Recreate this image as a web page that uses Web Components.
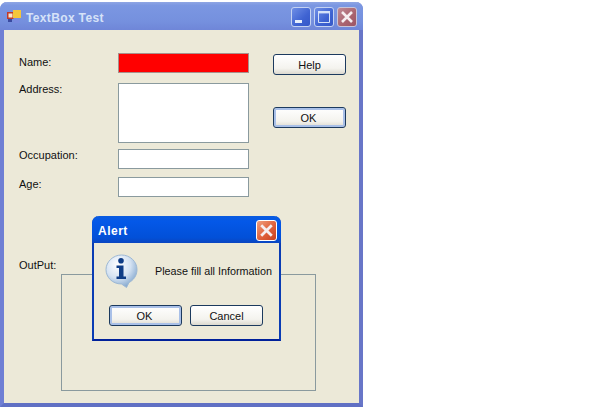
<!DOCTYPE html>
<html>
<head>
<meta charset="utf-8">
<title>TextBox Test</title>
<style>
html, body { margin: 0; background: #fff; }
body { width: 603px; height: 408px; overflow: hidden; position: relative; font: 11px "Liberation Sans", Arial, sans-serif; color: #111; }
</style>
</head>
<body>
<test-window></test-window>
<script>
const captionButtonTemplate = document.createElement('template');
captionButtonTemplate.innerHTML = `
<style>
:host { display: block; width: 20px; height: 20px; box-sizing: border-box; border: 1px solid #c4d2f2; border-radius: 3px; background: linear-gradient(135deg, #6f8fe6 0%, #3f63d2 60%, #3558c8 100%); }
:host([kind="close"]) { background: linear-gradient(135deg, #c08a94 0%, #a9636f 60%, #9c5564 100%); border-color: #c8c4d8; }
:host([active]) { width: 21px; height: 21px; background: linear-gradient(135deg, #f0a080 0%, #e0603a 55%, #c8401f 100%); border-color: #fff; }
svg { display: block; width: 100%; height: 100%; }
</style>
<svg viewBox="0 0 18 18"></svg>
`;
const captionGlyphs = {
  min: '<rect x="3" y="12" width="7" height="3" fill="#e6eefc"/>',
  max: '<path d="M3.500 4.500h11v10h-11z" fill="none" stroke="#d6e2f8"/><rect x="3" y="3" width="12" height="2.400" fill="#d6e2f8"/>',
  close: '<path d="M4 4l10 10M14 4L4 14" stroke="#f6eef0" stroke-width="2.600" fill="none"/>'
};

class CaptionButton extends HTMLElement {
  constructor() {
    super();
    this.attachShadow({ mode: 'open' });
    this.shadowRoot.appendChild(captionButtonTemplate.content.cloneNode(true));
  }

  connectedCallback() {
    this.shadowRoot.querySelector('svg').innerHTML = captionGlyphs[this.getAttribute('kind')];
  }
}
window.customElements.define('caption-button', CaptionButton);

const pushButtonTemplate = document.createElement('template');
pushButtonTemplate.innerHTML = `
<style>
:host { display: flex; align-items: center; justify-content: center; box-sizing: border-box; width: 73px; height: 21px; border: 1px solid #1c3a5e; border-radius: 3px; background: linear-gradient(#ffffff 0%, #f4f3ee 70%, #dcd9cf 100%); font: 11px "Liberation Sans", Arial, sans-serif; color: #111; }
:host([default]) { box-shadow: inset 0 0 0 2px #a9c0e8; padding-right: 2px; }
</style>
<slot></slot>
`;

class PushButton extends HTMLElement {
  constructor() {
    super();
    this.attachShadow({ mode: 'open' });
    this.shadowRoot.appendChild(pushButtonTemplate.content.cloneNode(true));
  }
}
window.customElements.define('push-button', PushButton);

const textFieldTemplate = document.createElement('template');
textFieldTemplate.innerHTML = `
<style>
:host { display: block; box-sizing: border-box; width: 131px; height: 20px; border: 1px solid #8a9a9e; background: #fff; }
:host([error]) { background: #ff0000; border-color: #a8908c; }
:host([tall]) { height: 60px; }
</style>
`;

class TextField extends HTMLElement {
  constructor() {
    super();
    this.attachShadow({ mode: 'open' });
    this.shadowRoot.appendChild(textFieldTemplate.content.cloneNode(true));
  }
}
window.customElements.define('text-field', TextField);

const alertDialogTemplate = document.createElement('template');
alertDialogTemplate.innerHTML = `
<style>
:host { position: absolute; left: 92px; top: 216px; width: 189px; height: 125px; display: flex; flex-direction: column; box-sizing: border-box; border-radius: 7px 7px 0 0; border: 2px solid #0a3cb4; border-top: 0; border-bottom-color: #00209a; background: #ece9d8; }
.title { height: 27px; margin: 0 -2px; border-radius: 7px 7px 0 0; display: flex; align-items: center; justify-content: space-between; padding: 2px 4px 0 6px; box-sizing: border-box; background: linear-gradient(#0a5ce0 0%, #0458e8 20%, #0250d8 80%, #0a45c0 100%); color: #fff; font: bold 12px "Liberation Sans", Arial, sans-serif; letter-spacing: .5px; }
.message { display: flex; gap: 17px; padding: 11px 0 0 11px; height: 35px; white-space: nowrap; font-size: 10.800px; }
.message svg { flex: none; width: 33px; height: 35px; }
.message span { padding-top: 11px; }
.buttons { display: flex; gap: 8px; padding: 16px 0 0 15px; }
</style>
<div class="title"><span>Alert</span><caption-button kind="close" active></caption-button></div>
<div class="message">
<svg viewBox="0 0 33 35">
<defs>
<radialGradient id="bubble" cx=".38" cy=".3" r=".75"><stop offset="0" stop-color="#ffffff"/><stop offset=".55" stop-color="#d4e2f2"/><stop offset="1" stop-color="#7fa4cc"/></radialGradient>
</defs>
<path d="M16.500 1C25 1 32 7.500 32 15.500C32 22 28 26.500 24 28.500L21.500 33.500 16.500 30C7 30 1 23 1 15.500S8 1 16.500 1z" fill="url(#bubble)" stroke="#9db8d4"/>
<circle cx="16" cy="6.800" r="2.800" fill="#0f3d86"/>
<path d="M11.500 11.500h7v11h2.500V25H11.500v-2.500h2.500V14H11.500z" fill="#0f3d86"/>
</svg>
<span><slot></slot></span>
</div>
<div class="buttons"><push-button default>OK</push-button><push-button>Cancel</push-button></div>
`;

class AlertDialog extends HTMLElement {
  constructor() {
    super();
    this.attachShadow({ mode: 'open' });
    this.shadowRoot.appendChild(alertDialogTemplate.content.cloneNode(true));
  }
}
window.customElements.define('alert-dialog', AlertDialog);

const testWindowTemplate = document.createElement('template');
testWindowTemplate.innerHTML = `
<style>
:host { position: absolute; left: 0; top: 2px; width: 363px; height: 405px; display: flex; flex-direction: column; box-sizing: border-box; border-radius: 7px 7px 0 0; border: 4px solid #6f7fd4; border-top: 0; border-right-color: #6876c8; border-bottom-color: #6070c4; background: #ece9d8; }
.title { flex: none; height: 28px; margin: 0 -4px; padding: 0 6px 0 7px; display: flex; align-items: center; gap: 5px; border-radius: 7px 7px 0 0; background: linear-gradient(#8fa6e4 0%, #7b97e2 12%, #7590de 70%, #6f86d8 100%); color: #d6e2f8; font: bold 12px "Liberation Sans", Arial, sans-serif; letter-spacing: .35px; }
.title svg { flex: none; width: 14px; height: 13px; }
.title span { flex: 1; padding-top: 3px; }
.caption { display: flex; gap: 3px; margin-top: 1px; }
.client { flex: 1; display: flex; flex-direction: column; padding: 23px 0 0 15px; }
.top { display: flex; }
.form { display: grid; grid-template-columns: 99px 131px; grid-template-rows: 30px 66px 28px 20px; width: 254px; }
.name { padding-top: 3px; }
.age { padding-top: 1px; }
.actions { display: flex; flex-direction: column; gap: 32px; padding-top: 1px; }
.output-label { margin-top: 62px; height: 15px; }
.output { box-sizing: border-box; width: 255px; height: 117px; margin-left: 42px; border: 1px solid #8a9a9e; }
</style>
<div class="title">
<svg viewBox="0 0 14 13"><rect x="0" y="2" width="7" height="7" fill="#c03a2a"/><rect x="1.500" y="3.500" width="4" height="4" fill="#f8e8d0"/><rect x="6" y="0" width="8" height="8" fill="#f4c63c"/><rect x="6.500" y="8" width="6" height="5" fill="#7a8ce0"/><rect x="1" y="9" width="4" height="3" fill="#3a4aa0"/></svg>
<span>TextBox Test</span>
<div class="caption"><caption-button kind="min"></caption-button><caption-button kind="max"></caption-button><caption-button kind="close"></caption-button></div>
</div>
<div class="client">
<div class="top">
<div class="form">
<div class="name">Name:</div><text-field error></text-field>
<div>Address:</div><text-field tall></text-field>
<div>Occupation:</div><text-field></text-field>
<div class="age">Age:</div><text-field></text-field>
</div>
<div class="actions"><push-button>Help</push-button><push-button default>OK</push-button></div>
</div>
<div class="output-label">OutPut:</div>
<div class="output"></div>
</div>
`;

class TestWindow extends HTMLElement {
  constructor() {
    super();
    this.attachShadow({ mode: 'open' });
    this.shadowRoot.appendChild(testWindowTemplate.content.cloneNode(true));
  }
}
window.customElements.define('test-window', TestWindow);
</script>
<alert-dialog>Please fill all Information</alert-dialog>
</body>
</html>
